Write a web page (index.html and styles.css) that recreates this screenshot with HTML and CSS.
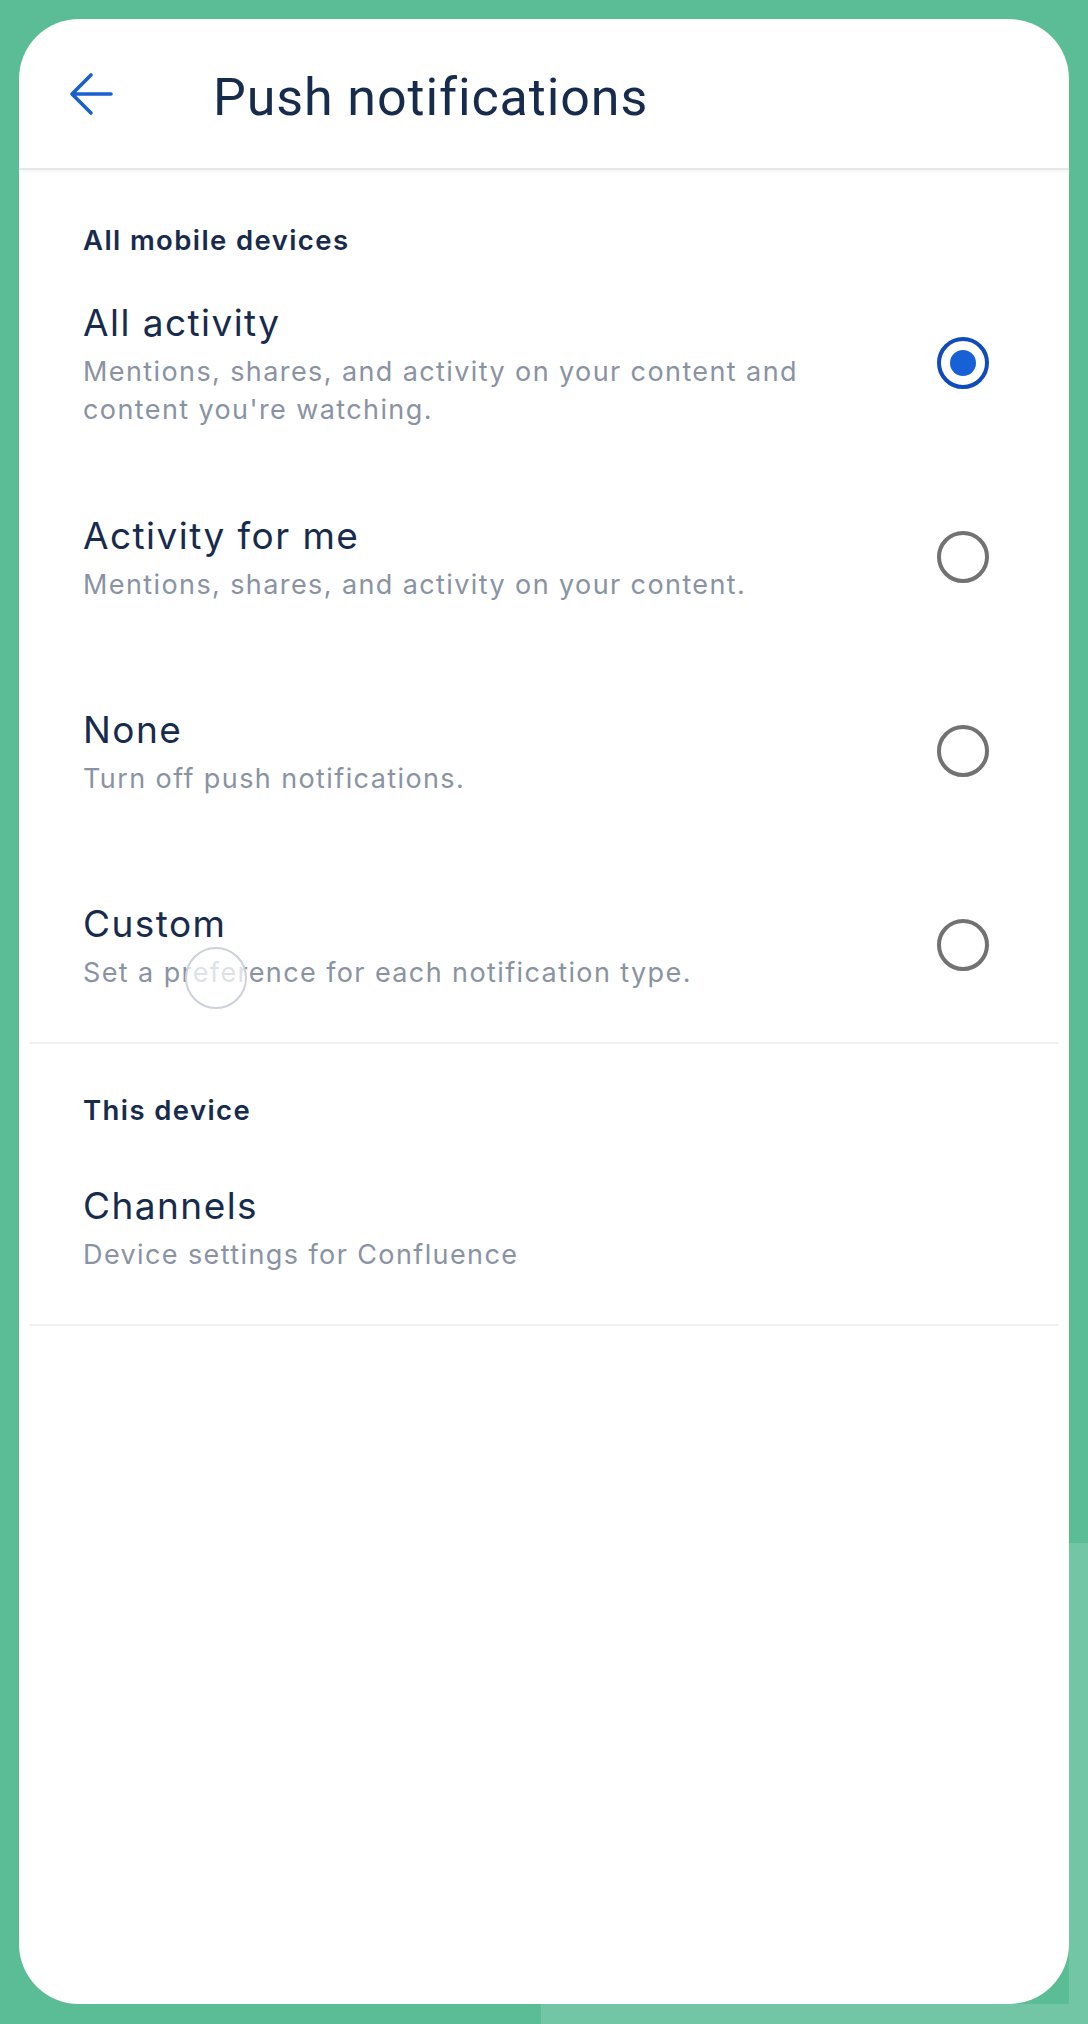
FILE: index.html
```html
<!DOCTYPE html>
<html lang="en">
<head>
<meta charset="utf-8">
<title>Push notifications</title>
<link rel="stylesheet" href="styles.css">
</head>
<body>
<div class="screen">
  <header class="appbar">
    <svg class="back" width="44" height="44" viewBox="0 0 44 44" aria-hidden="true">
      <path d="M3 22 H42 M22 3 L3 22 L22 41" fill="none" stroke="#1a5fd0" stroke-width="3.6" stroke-linecap="round" stroke-linejoin="round"/>
    </svg>
    <h1 class="appbar-title">Push notifications</h1>
  </header>

  <section class="group">
    <h2 class="group-label">All mobile devices</h2>
    <div class="row">
      <div class="row-text">
        <div class="row-title">All activity</div>
        <div class="row-desc">Mentions, shares, and activity on your content and<br>content you're watching.</div>
      </div>
      <span class="radio radio--on"></span>
    </div>
    <div class="row">
      <div class="row-text">
        <div class="row-title">Activity for me</div>
        <div class="row-desc">Mentions, shares, and activity on your content.</div>
      </div>
      <span class="radio"></span>
    </div>
    <div class="row">
      <div class="row-text">
        <div class="row-title">None</div>
        <div class="row-desc">Turn off push notifications.</div>
      </div>
      <span class="radio"></span>
    </div>
    <div class="row">
      <div class="row-text">
        <div class="row-title">Custom</div>
        <div class="row-desc">Set a preference for each notification type.<span class="touch"></span></div>
      </div>
      <span class="radio"></span>
    </div>
  </section>
  <div class="divider"></div>

  <section class="group group--second">
    <h2 class="group-label">This device</h2>
    <div class="row">
      <div class="row-text">
        <div class="row-title">Channels</div>
        <div class="row-desc">Device settings for Confluence</div>
      </div>
    </div>
  </section>
  <div class="divider"></div>
</div>
</body>
</html>
```

FILE: styles.css
```css
html, body {
  margin: 0;
  padding: 0;
}

body {
  width: 1088px;
  height: 2024px;
  overflow: hidden;
  font-family: Inter, Roboto, "Noto Sans", "Liberation Sans", sans-serif;
  background-color: #5bbd95;
  background-image:
    linear-gradient(#72c6a6, #72c6a6),
    linear-gradient(#72c6a6, #72c6a6);
  background-repeat: no-repeat;
  background-size: 19px 500px, 560px 20px;
  background-position: right 0 top 1543px, left 541px bottom 0;
  padding: 19px 19px 0 19px;
  box-sizing: border-box;
}

.screen {
  height: 1985px;
  background: #ffffff;
  border-radius: 60px;
  overflow: hidden;
}

.appbar {
  height: 151px;
  box-sizing: border-box;
  display: flex;
  align-items: center;
  padding-left: 50px;
  border-bottom: 2px solid #e6e7ea;
  box-shadow: 0 2px 3px rgba(0, 0, 0, 0.04);
}

.back {
  flex: none;
  display: block;
}

.appbar-title {
  margin: 8px 0 0 100px;
  font-family: Roboto, "Noto Sans", "Liberation Sans", sans-serif;
  font-size: 52px;
  line-height: 52px;
  font-weight: 400;
  letter-spacing: 0.9px;
  color: #172b4d;
}

.group {
  padding-top: 54px;
}

.group--second {
  padding-top: 50px;
}

.group-label {
  margin: 0 0 10px 64px;
  font-size: 27.5px;
  line-height: 32px;
  font-weight: 600;
  letter-spacing: 1.4px;
  color: #172b4d;
}

.group--second .group-label {
  margin-bottom: 4px;
}

.row {
  height: 194px;
  display: flex;
  align-items: center;
  padding: 0 80px 0 64px;
}

.row-text {
  flex: 1;
}

.row-title {
  font-size: 37px;
  line-height: 50px;
  letter-spacing: 1.45px;
  color: #172b4d;
}

.row-desc {
  position: relative;
  margin-top: 5px;
  font-size: 27px;
  line-height: 38px;
  letter-spacing: 1.4px;
  color: #8a93a3;
}

.radio {
  flex: none;
  width: 52px;
  height: 52px;
  box-sizing: border-box;
  border: 4px solid #727272;
  border-radius: 50%;
  display: flex;
  align-items: center;
  justify-content: center;
}

.radio--on {
  border-color: #0f4bbf;
}

.radio--on::after {
  content: "";
  width: 26px;
  height: 26px;
  border-radius: 50%;
  background: #1760d6;
}

.divider {
  height: 2px;
  margin: 0 10px;
  background: #f0f1f3;
}

.touch {
  position: absolute;
  left: 102px;
  top: -7px;
  width: 62px;
  height: 62px;
  box-sizing: border-box;
  border: 2px solid #cdd1d9;
  border-radius: 50%;
  background: rgba(255, 255, 255, 0.72);
}
```
